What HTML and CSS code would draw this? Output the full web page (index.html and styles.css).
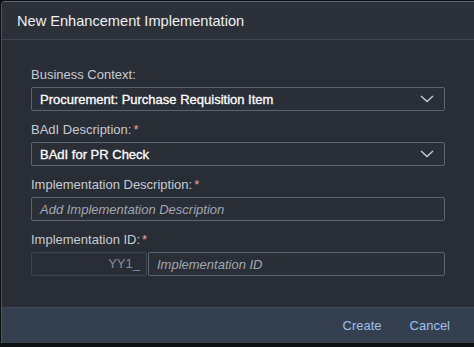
FILE: index.html
```html
<!DOCTYPE html>
<html lang="en">
<head>
    <meta charset="UTF-8">
    <meta name="viewport" content="width=device-width, initial-scale=1.0">
    <title>New Enhancement Implementation</title>
    <link rel="stylesheet" href="styles.css">
</head>
<body>
    <div class="dialog">
        <div class="dialog-header">New Enhancement Implementation</div>

        <div class="dialog-content">
            <div class="form-group">
                <label>Business Context:</label>
                <div class="select">
                    <span>Procurement: Purchase Requisition Item</span>
                    <svg class="chevron" width="14" height="8" viewBox="0 0 14 8"><path d="M1 1l6 5.5L13 1" fill="none" stroke="#c3cbd6" stroke-width="1.4"/></svg>
                </div>
            </div>

            <div class="form-group">
                <label>BAdI Description:<span class="required">*</span></label>
                <div class="select">
                    <span>BAdI for PR Check</span>
                    <svg class="chevron" width="14" height="8" viewBox="0 0 14 8"><path d="M1 1l6 5.5L13 1" fill="none" stroke="#c3cbd6" stroke-width="1.4"/></svg>
                </div>
            </div>

            <div class="form-group">
                <label>Implementation Description:<span class="required">*</span></label>
                <div class="input placeholder">Add Implementation Description</div>
            </div>

            <div class="form-group">
                <label>Implementation ID:<span class="required">*</span></label>
                <div class="id-row">
                    <div class="prefix">YY1_</div>
                    <div class="input placeholder">Implementation ID</div>
                </div>
            </div>
        </div>

        <div class="dialog-footer">
            <button>Create</button>
            <button>Cancel</button>
        </div>
    </div>
</body>
</html>
```

FILE: styles.css
```css
body {
    margin: 0;
    background-color: #0d0f12;
    font-family: "Liberation Sans", Arial, sans-serif;
    font-size: 13px;
    color: #d4d9e0;
}
.dialog {
    margin: 1px 0 0 1px;
    border-top: 1px solid #5f6670;
    border-left: 1px solid #4f5560;
    border-top-left-radius: 4px;
    background-color: #292d36;
    overflow: hidden;
}
.dialog-header {
    height: 37px;
    line-height: 39px;
    padding-left: 15px;
    font-size: 14.6px;
    color: #eef1f5;
    background-color: #2b3039;
    border-bottom: 1px solid #3e434d;
}
.dialog-content {
    padding: 27px 29px 31px 29px;
}
.form-group {
    margin-bottom: 11px;
}
.form-group:last-child {
    margin-bottom: 0;
}
label {
    display: block;
    margin-bottom: 4px;
    color: #c6ccd5;
    line-height: 16px;
}
.required {
    color: #e8a3a3;
    margin-left: 2px;
}
.select, .input {
    height: 22px;
    border: 1px solid #5d6471;
    border-radius: 2px;
    background-color: #2a2e37;
    display: flex;
    align-items: center;
    padding: 0 8px;
    box-sizing: content-box;
}
.select {
    justify-content: space-between;
    color: #ffffff;
    -webkit-text-stroke: 0.3px #ffffff;
}
.chevron {
    margin-right: 2px;
}
.placeholder {
    color: #a0a7b2;
    font-style: italic;
}
.id-row {
    display: flex;
    gap: 1px;
}
.prefix {
    width: 108px;
    height: 22px;
    line-height: 22px;
    border: 1px solid #3f444e;
    border-radius: 2px;
    padding-right: 6px;
    text-align: right;
    color: #868d98;
}
.id-row .input {
    flex: 1;
}
.dialog-footer {
    height: 35px;
    background-color: #343f50;
    border-top: 1px solid #3c4656;
    display: flex;
    justify-content: flex-end;
    align-items: center;
    gap: 28px;
    padding-right: 24px;
}
button {
    background: none;
    border: none;
    padding: 0;
    font-family: inherit;
    font-size: 13px;
    color: #9fc1ef;
    cursor: pointer;
}
```
